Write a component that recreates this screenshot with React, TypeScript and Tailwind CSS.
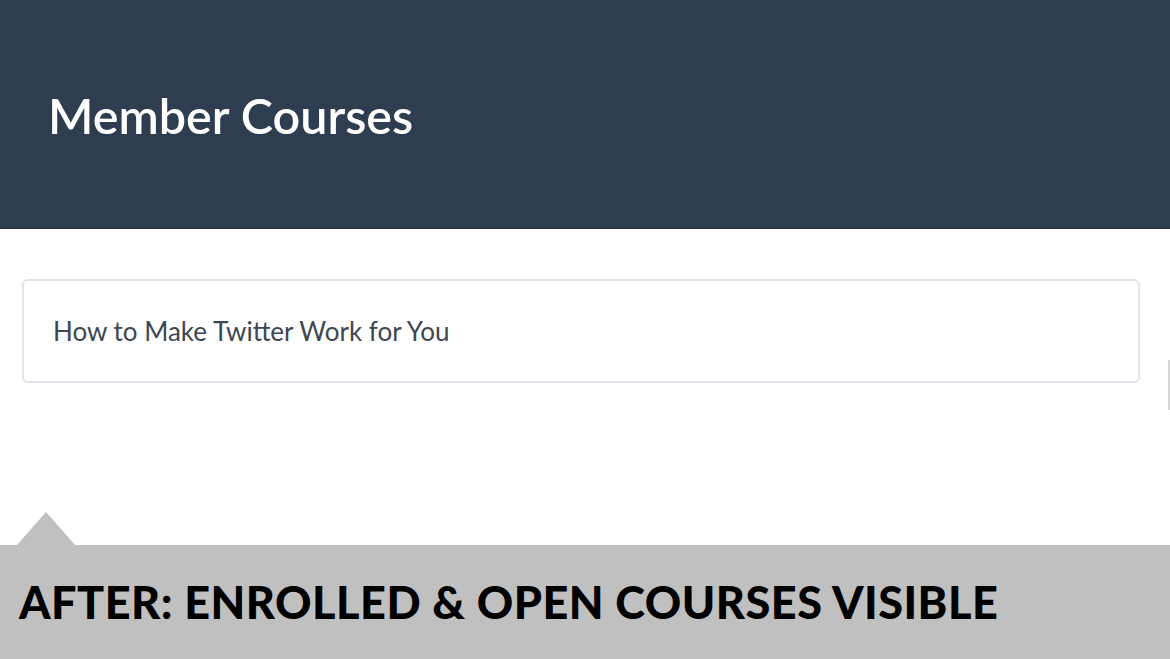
export default function App() {
  return (
    <div className="relative flex h-[659px] w-[1170px] flex-col overflow-hidden bg-white">
      <header className="flex h-[229px] shrink-0 items-center border-b border-[#222d3b] bg-[#2e3d50] pl-12">
        <h1 className="mt-[2px] font-['Lato',sans-serif] text-[48.5px] font-semibold text-white">
          Member Courses
        </h1>
      </header>

      <main className="flex-1 pl-[22px] pr-[30px] pt-[50px]">
        <div className="flex h-[104px] items-center rounded-md border-2 border-[#e1e4ee] pl-[29px]">
          <span className="font-['Lato',sans-serif] text-[26px] text-[#3e4651]">
            How to Make Twitter Work for You
          </span>
        </div>
      </main>

      {/* scrollbar edge peeking in on the right */}
      <div className="absolute right-0 top-[360px] h-[50px] w-[2px] bg-[#d4d4d4]" />

      <footer className="relative flex h-[114px] shrink-0 items-center bg-[#c0c0c0] pl-[19px]">
        <svg className="absolute -top-[33px] left-[17px]" width="58" height="33" viewBox="0 0 58 33">
          <polygon points="0,33 29,0 58,33" fill="#c0c0c0" />
        </svg>
        <span className="font-['Lato',sans-serif] text-[45px] font-black leading-none tracking-[0.5px] text-black">
          AFTER: ENROLLED &amp; OPEN COURSES VISIBLE
        </span>
      </footer>
    </div>
  );
}
